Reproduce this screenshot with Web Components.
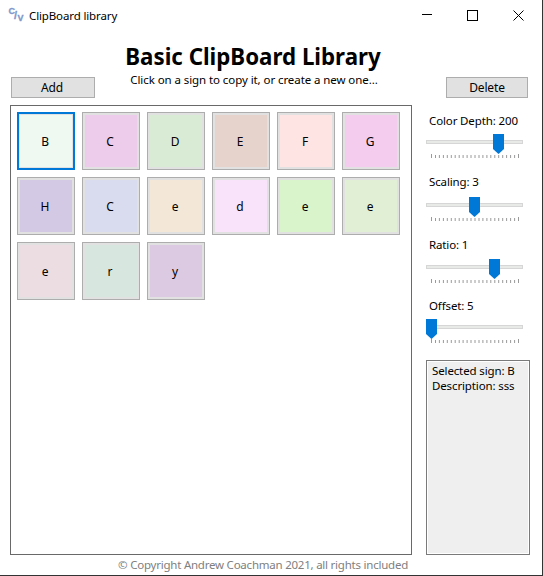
<!DOCTYPE html>
<html>
<head>
<meta charset="utf-8">
<title>ClipBoard library</title>
<style>
    html, body { margin: 0; padding: 0; background: #fff; }
    body { font-family: "Noto Sans", "Open Sans", sans-serif; font-size: 11.5px; letter-spacing: -.13px; color: #000; }
</style>
</head>
<body>
<app-window></app-window>
<script>
// Signs shown in the library
const SIGNS = [
    { label: 'B', color: '#eff9f1', selected: true },
    { label: 'C', color: '#edcceb' },
    { label: 'D', color: '#d9ead5' },
    { label: 'E', color: '#e6d3cc' },
    { label: 'F', color: '#fee5e3' },
    { label: 'G', color: '#f4cdee' },
    { label: 'H', color: '#d3c9e5' },
    { label: 'C', color: '#d9dcee' },
    { label: 'e', color: '#f3e7d8' },
    { label: 'd', color: '#f8e3fa' },
    { label: 'e', color: '#d9f3cb' },
    { label: 'e', color: '#e1f0d5' },
    { label: 'e', color: '#ecdde2' },
    { label: 'r', color: '#d7e6de' },
    { label: 'y', color: '#dccae2' }
];

// top = gap above the label, drop = gap between label and track
const SLIDERS = [
    { label: 'Color Depth: 200', left: 67, top: 0, drop: 5 },
    { label: 'Scaling: 3', left: 43, top: 16, drop: 7 },
    { label: 'Ratio: 1', left: 63, top: 16, drop: 6 },
    { label: 'Offset: 5', left: 0, top: 15, drop: 5 }
];

class TitleBar extends HTMLElement {
    constructor() {
        super();
        this.attachShadow({ mode: 'open' });
    }

    connectedCallback() {
        this.shadowRoot.innerHTML = `
            <style>
                :host { display: flex; align-items: center; height: 30px; }
                .icon { margin-left: 8px; width: 16px; height: 16px; }
                .icon text { font-family: "Liberation Sans", sans-serif; font-weight: 700; font-size: 9px; letter-spacing: 0; fill: #7f97cb; stroke: #7f97cb; stroke-width: .3; }
                .name { margin-left: 5px; font-size: 11.5px; }
                .controls { margin-left: auto; display: flex; margin-right: 1px; }
                .controls div { width: 46px; height: 30px; display: flex; align-items: center; justify-content: center; }
                .controls div:first-child svg { margin-left: 2px; }
            </style>
            <svg class="icon" viewBox="0 0 16 16">
                <text><tspan x="0.5" y="7">C</tspan><tspan x="6" y="12" font-size="11">/</tspan><tspan x="9.5" y="14">V</tspan></text>
            </svg>
            <span class="name">ClipBoard library</span>
            <div class="controls">
                <div><svg width="10" height="10"><path d="M0 4.5H10" stroke="#000" fill="none"/></svg></div>
                <div><svg width="11" height="11"><rect x=".5" y=".5" width="10" height="10" stroke="#000" fill="none"/></svg></div>
                <div><svg width="11" height="11"><path d="M.5 .5L10.5 10.5M10.5 .5L.5 10.5" stroke="#000" fill="none"/></svg></div>
            </div>
        `;
    }
}

class PushButton extends HTMLElement {
    constructor() {
        super();
        this.attachShadow({ mode: 'open' });
    }

    connectedCallback() {
        this.shadowRoot.innerHTML = `
            <style>
                :host {
                    display: flex; align-items: center; justify-content: center;
                    box-sizing: border-box; height: 21px; padding-right: 2px;
                    background: #e1e1e1; border: 1px solid #adadad;
                    font-size: 12px;
                }
            </style>
            <slot></slot>
        `;
    }
}

class SignTile extends HTMLElement {
    constructor() {
        super();
        this.attachShadow({ mode: 'open' });
    }

    connectedCallback() {
        const selected = this.hasAttribute('selected');
        this.shadowRoot.innerHTML = `
            <style>
                :host {
                    display: block; box-sizing: border-box; width: 58px; height: 58px;
                    padding: ${selected ? '1px' : '2px'};
                    background: #e1e1e1;
                    border: ${selected ? '2px solid #0078d7' : '1px solid #adadad'};
                }
                div {
                    box-sizing: border-box; height: 100%; padding-right: 2px;
                    display: flex; align-items: center; justify-content: center;
                    background: ${this.getAttribute('color')};
                    font-size: 12px;
                }
            </style>
            <div><slot></slot></div>
        `;
    }
}

class SignGrid extends HTMLElement {
    constructor() {
        super();
        this.attachShadow({ mode: 'open' });
    }

    connectedCallback() {
        this.shadowRoot.innerHTML = `
            <style>
                :host {
                    display: grid; box-sizing: border-box;
                    grid-template-columns: repeat(6, 58px); grid-auto-rows: 58px;
                    gap: 7px; align-content: start;
                    width: 402px; height: 450px; margin-left: 10px;
                    padding: 6px;
                    background: #fff; border: 1px solid #696969;
                }
            </style>
            ${SIGNS.map(sign => `
                <sign-tile color="${sign.color}" ${sign.selected ? 'selected' : ''}>${sign.label}</sign-tile>
            `).join('')}
        `;
    }
}

class ValueSlider extends HTMLElement {
    constructor() {
        super();
        this.attachShadow({ mode: 'open' });
    }

    connectedCallback() {
        const left = this.getAttribute('left');
        const drop = this.getAttribute('drop');
        // tick marks sit about every 4px, the two end ones are longer
        let ticks = '';
        for (let i = 0; i <= 22; i++) {
            const x = 0.5 + i * 3.955;
            const end = i === 0 || i === 22;
            ticks += `<path d="M${x.toFixed(1)} ${end ? 0 : 1}V4"/>`;
        }
        this.shadowRoot.innerHTML = `
            <style>
                :host { display: block; width: 104px; }
                .label { padding-left: 3px; height: 16px; line-height: 16px; }
                .rail { position: relative; width: 97px; height: 20px; margin-top: ${drop}px; }
                .track {
                    position: absolute; left: 0; right: 0; top: 6px; height: 4px;
                    box-sizing: border-box; background: #e7eae7; border: 1px solid #d6d6d6;
                }
                .thumb { position: absolute; left: ${left}px; top: 0; }
                .ticks { display: block; margin: 0 0 0 5px; }
                .ticks path { stroke: #9a9a9a; stroke-width: 1; fill: none; }
            </style>
            <div class="label"><slot></slot></div>
            <div class="rail">
                <div class="track"></div>
                <svg class="thumb" width="11" height="20"><path d="M0 0H11V15L5.5 20L0 15Z" fill="#0078d7"/></svg>
            </div>
            <svg class="ticks" width="89" height="4"><g>${ticks}</g></svg>
        `;
    }
}

class InfoPanel extends HTMLElement {
    constructor() {
        super();
        this.attachShadow({ mode: 'open' });
    }

    connectedCallback() {
        this.shadowRoot.innerHTML = `
            <style>
                :host {
                    display: block; box-sizing: border-box; width: 104px; height: 195px;
                    border: 1px solid #7a7a7a; background: #efefef;
                    box-shadow: inset 0 0 0 1px #fff;
                    padding: 2px 5px;
                    line-height: 15px;
                }
            </style>
            <slot></slot>
        `;
    }
}

class AppWindow extends HTMLElement {
    constructor() {
        super();
        this.attachShadow({ mode: 'open' });
    }

    connectedCallback() {
        this.shadowRoot.innerHTML = `
            <style>
                :host {
                    display: block; box-sizing: border-box; width: 543px; height: 576px;
                    border-right: 1px solid #333; border-bottom: 1px solid #333;
                    overflow: hidden;
                }
                .head {
                    display: grid; grid-template-columns: 84px 316px 82px; column-gap: 0;
                    height: 75px; padding-left: 11px;
                }
                .head push-button { align-self: end; margin-bottom: 7px; }
                .head push-button:last-child { margin-left: 35px; width: 82px; padding-right: 0; }
                .heading { text-align: center; padding-top: 12px; white-space: nowrap; }
                h1 { margin: 0; font-size: 22.3px; line-height: 30px; font-weight: 700; letter-spacing: 0; }
                p { margin: 0; padding-left: 2px; line-height: 16px; letter-spacing: -.08px; }
                .body { display: flex; }
                .side { margin-left: 14px; display: flex; flex-direction: column; }
                .sliders { padding-top: 8px; }
                info-panel { margin-top: 17px; }
                footer {
                    margin: 2px 134px 0 0; text-align: right;
                    font-size: 11.5px; line-height: 16px; letter-spacing: -.23px; color: #808080;
                }
            </style>
            <title-bar></title-bar>
            <div class="head">
                <push-button>Add</push-button>
                <div class="heading">
                    <h1>Basic ClipBoard Library</h1>
                    <p>Click on a sign to copy it, or create a new one...</p>
                </div>
                <push-button>Delete</push-button>
            </div>
            <div class="body">
                <sign-grid></sign-grid>
                <div class="side">
                    <div class="sliders">
                        ${SLIDERS.map(s => `
                            <value-slider left="${s.left}" drop="${s.drop}" style="margin-top:${s.top}px">${s.label}</value-slider>
                        `).join('')}
                    </div>
                    <info-panel>Selected sign: B<br>Description: sss</info-panel>
                </div>
            </div>
            <footer>© Copyright Andrew Coachman 2021, all rights included</footer>
        `;
    }
}

customElements.define('title-bar', TitleBar);
customElements.define('push-button', PushButton);
customElements.define('sign-tile', SignTile);
customElements.define('sign-grid', SignGrid);
customElements.define('value-slider', ValueSlider);
customElements.define('info-panel', InfoPanel);
customElements.define('app-window', AppWindow);
</script>
</body>
</html>
